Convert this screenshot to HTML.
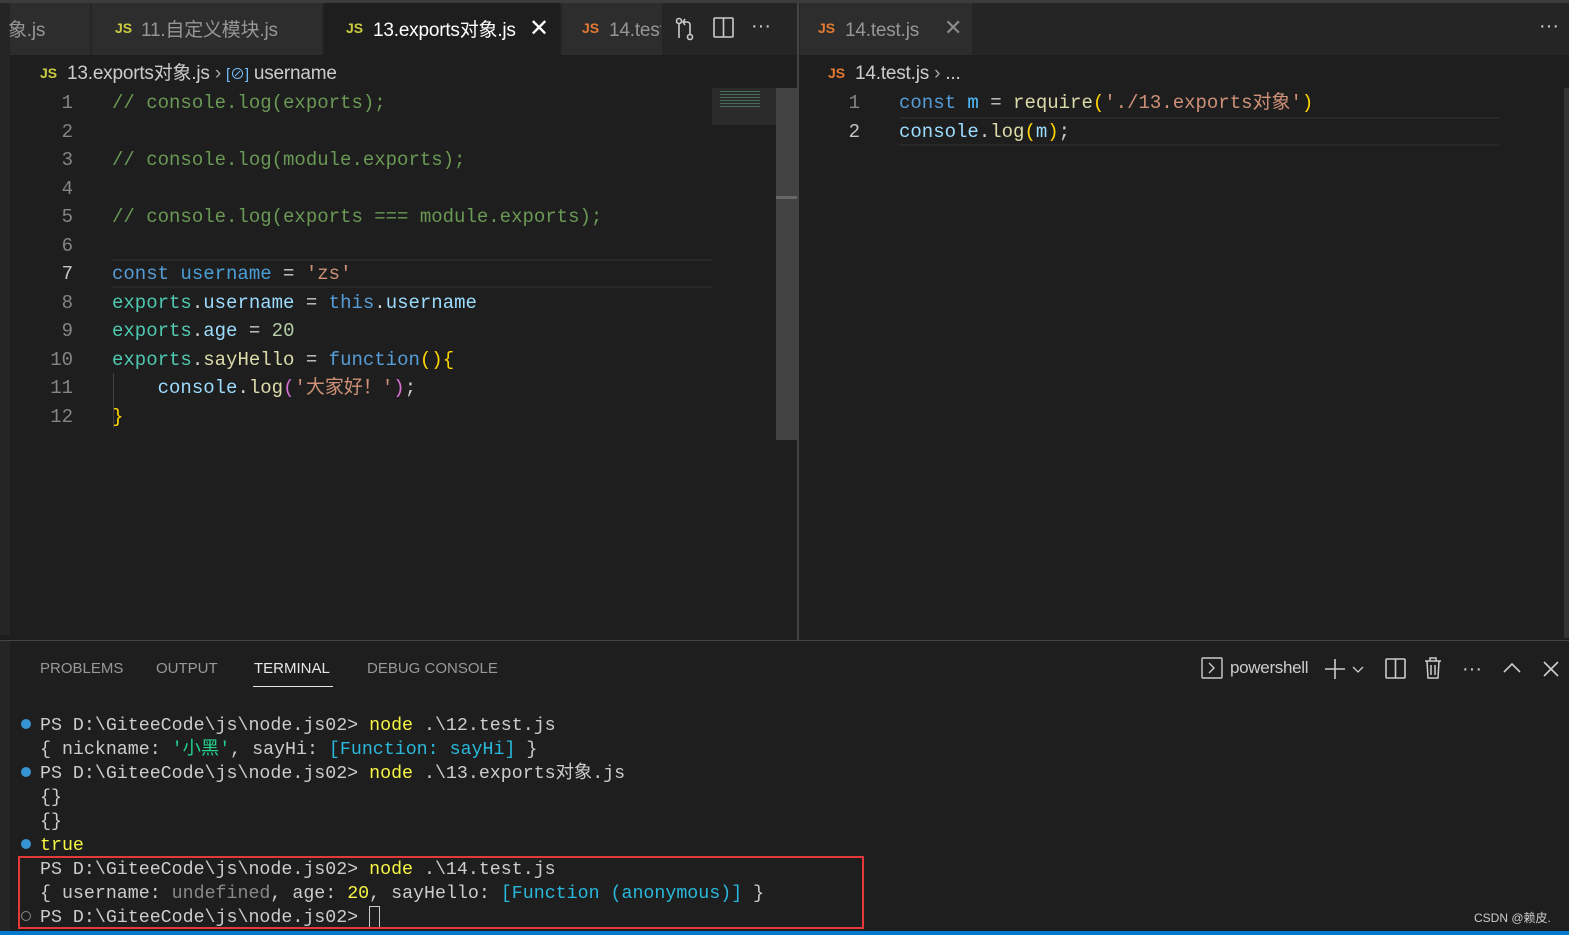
<!DOCTYPE html>
<html><head><meta charset="utf-8">
<style>
*{margin:0;padding:0;box-sizing:border-box}
body{width:1569px;height:935px;background:#1e1e1e;position:relative;overflow:hidden;font-family:"Liberation Sans","Noto Sans CJK SC",sans-serif;color:#ccc}
.a{position:absolute;white-space:pre}
.m{font-family:"Liberation Mono","Noto Sans CJK SC",monospace;font-size:19px;line-height:28.5px}
.t{font-family:"Liberation Mono","Noto Sans CJK SC",monospace;font-size:18.3px;line-height:24px;color:#ccc}
.js{font-weight:bold;font-size:14px;color:#cbcb41}
.jso{font-weight:bold;font-size:14px;color:#e37933}
.tab{font-size:19px;line-height:28px;letter-spacing:-0.2px}
.c{color:#6a9955}.k{color:#569cd6}.v{color:#4fc1ff}.s{color:#ce9178}.p{color:#4ec9b0}.f{color:#dcdcaa}.n{color:#b5cea8}.y{color:#ffd700}.pk{color:#da70d6}.pr{color:#9cdcfe}
.ln{color:#858585;text-align:right;width:40px}
.pl{font-size:15px;color:#999;line-height:20px}
</style></head><body>
<div class="a" style="left:0;top:0;width:1569px;height:55px;background:#252526"></div>
<div class="a" style="left:0;top:0;width:1569px;height:3px;background:#3c3c3c"></div>
<div class="a" style="left:10px;top:3px;width:80px;height:52px;background:#2d2d2d"></div>
<div class="a" style="left:92px;top:3px;width:230px;height:52px;background:#2d2d2d"></div>
<div class="a" style="left:324px;top:3px;width:236px;height:52px;background:#1e1e1e"></div>
<div class="a" style="left:562px;top:3px;width:100px;height:52px;background:#2d2d2d"></div>
<div class="a" style="left:800px;top:3px;width:172px;height:52px;background:#2d2d2d"></div>
<div class="a tab" style="left:8px;top:17px;color:#969696">象.js</div>
<div class="a js" style="left:115px;top:20px">JS</div><div class="a tab" style="left:141px;top:17px;color:#969696">11.自定义模块.js</div>
<div class="a js" style="left:346px;top:20px">JS</div><div class="a tab" style="left:373px;top:17px;color:#fff">13.exports对象.js</div>
<div class="a" style="left:529px;top:14px;font-size:24px;color:#fff">✕</div>
<div class="a jso" style="left:582px;top:20px">JS</div><div class="a tab" style="left:609px;top:17px;color:#969696;width:52px;overflow:hidden">14.test</div>
<svg class="a" style="left:674px;top:17px" width="22" height="24" viewBox="0 0 22 24" fill="none" stroke="#ccc" stroke-width="1.6"><circle cx="5" cy="4" r="2.5"/><circle cx="16" cy="20" r="2.5"/><path d="M5 7v14M16 17V8q0-3-3-3H9m2-3-2 3 2 3"/></svg>
<svg class="a" style="left:713px;top:17px" width="22" height="22" fill="none" stroke="#ccc" stroke-width="1.6"><rect x="1" y="1" width="19" height="19" rx="1"/><path d="M10.5 1v19"/></svg>
<div class="a" style="left:751px;top:15px;font-size:20px;color:#ccc">···</div>
<div class="a jso" style="left:818px;top:20px">JS</div><div class="a tab" style="left:845px;top:17px;color:#969696">14.test.js</div>
<div class="a" style="left:944px;top:15px;font-size:22px;color:#8b8b8b">✕</div>
<div class="a" style="left:1539px;top:15px;font-size:20px;color:#ccc">···</div>
<div class="a" style="left:0;top:55px;width:10px;height:580px;background:#252526"></div>
<div class="a js" style="left:40px;top:65px">JS</div><div class="a" style="left:67px;top:62px;font-size:19px;line-height:24px;letter-spacing:-0.2px">13.exports对象.js <span style="color:#aaa">›</span> <span style="color:#75beff;font-size:15px">[⊘]</span> username</div>
<div class="a jso" style="left:828px;top:65px">JS</div><div class="a" style="left:855px;top:62px;font-size:19px;line-height:24px;letter-spacing:-0.2px">14.test.js <span style="color:#aaa">›</span> ...</div>
<div class="a" style="left:112px;top:259px;width:600px;height:29px;border-top:2px solid #282828;border-bottom:2px solid #282828"></div>
<div class="a m ln" style="left:33px;top:89px">1
2
3
4
5
6
<span style="color:#c6c6c6">7</span>
8
9
10
11
12</div>
<div class="a m" style="left:112px;top:89px"><span class="c">// console.log(exports);</span>

<span class="c">// console.log(module.exports);</span>

<span class="c">// console.log(exports === module.exports);</span>

<span class="k">const</span> <span class="v" style="color:#4a9fd6">username</span> = <span class="s">'zs'</span>
<span class="p">exports</span>.<span class="pr">username</span> = <span class="k">this</span>.<span class="pr">username</span>
<span class="p">exports</span>.<span class="pr">age</span> = <span class="n">20</span>
<span class="p">exports</span>.<span class="f">sayHello</span> = <span class="k">function</span><span class="y">(){</span>
    <span class="pr">console</span>.<span class="f">log</span><span class="pk">(</span><span class="s">'大家好！'</span><span class="pk">)</span>;
<span class="y">}</span></div>
<div class="a" style="left:113px;top:373px;width:1px;height:55px;background:#404040"></div>
<div class="a" style="left:712px;top:88px;width:64px;height:37px;background:#2b2b2b"></div>
<div class="a" style="left:720px;top:91px;width:40px;height:18px;background:repeating-linear-gradient(#4a6a5a 0 1px,transparent 1px 3px)"></div>
<div class="a" style="left:776px;top:88px;width:21px;height:352px;background:#424242"></div>
<div class="a" style="left:776px;top:196px;width:21px;height:3px;background:#666"></div>
<div class="a" style="left:797px;top:3px;width:2px;height:637px;background:#444"></div>
<div class="a" style="left:1564px;top:88px;width:5px;height:550px;background:#333"></div>
<div class="a" style="left:899px;top:117px;width:600px;height:29px;border-top:2px solid #282828;border-bottom:2px solid #282828"></div>
<div class="a m ln" style="left:820px;top:89px">1
<span style="color:#c6c6c6">2</span></div>
<div class="a m" style="left:899px;top:89px"><span class="k">const</span> <span class="v">m</span> = <span class="f">require</span><span class="y">(</span><span class="s">'./13.exports对象'</span><span class="y">)</span>
<span class="pr">console</span>.<span class="f">log</span><span class="y">(</span><span class="pr">m</span><span class="y">)</span>;</div>
<div class="a" style="left:0;top:640px;width:1569px;height:1px;background:#444"></div>
<div class="a" style="left:0;top:641px;width:10px;height:290px;background:#252526"></div>
<div class="a pl" style="left:40px;top:659px">PROBLEMS</div>
<div class="a pl" style="left:156px;top:659px">OUTPUT</div>
<div class="a pl" style="left:254px;top:659px;color:#e7e7e7">TERMINAL</div>
<div class="a" style="left:253px;top:686px;width:80px;height:1px;background:#e7e7e7"></div>
<div class="a pl" style="left:367px;top:659px">DEBUG CONSOLE</div>
<svg class="a" style="left:1201px;top:657px" width="22" height="22" fill="none" stroke="#ccc" stroke-width="1.4"><rect x="1" y="1" width="20" height="20" rx="1"/><path d="M8 6l5 5-5 5"/></svg>
<div class="a" style="left:1230px;top:658px;font-size:17px;color:#ccc;letter-spacing:-0.3px">powershell</div>
<svg class="a" style="left:1324px;top:657px" width="44" height="24" fill="none" stroke="#ccc" stroke-width="1.6"><path d="M11 2v20M1 12h20"/><path d="M29 10l5 5 5-5" stroke-width="1.3"/></svg>
<svg class="a" style="left:1385px;top:658px" width="21" height="21" fill="none" stroke="#ccc" stroke-width="1.6"><rect x="1" y="1" width="19" height="19" rx="1"/><path d="M10.5 1v19"/></svg>
<svg class="a" style="left:1424px;top:657px" width="18" height="22" fill="none" stroke="#ccc" stroke-width="1.5"><path d="M1 4h16M6 4V1h6v3M3 4l1 17h10l1-17M7 8v10M11 8v10"/></svg>
<div class="a" style="left:1462px;top:658px;font-size:20px;color:#ccc">···</div>
<svg class="a" style="left:1503px;top:661px" width="18" height="14" fill="none" stroke="#ccc" stroke-width="1.6"><path d="M1 11l8-8 8 8"/></svg>
<svg class="a" style="left:1543px;top:661px" width="16" height="16" fill="none" stroke="#ccc" stroke-width="1.6"><path d="M1 1l14 14M15 1L1 15"/></svg>
<div class="a t" style="left:40px;top:714px">PS D:\GiteeCode\js\node.js02&gt; <span style="color:#f5f543">node</span> .\12.test.js
{ nickname: <span style="color:#23d18b">'小黑'</span>, sayHi: <span style="color:#29b8db">[Function: sayHi]</span> }
PS D:\GiteeCode\js\node.js02&gt; <span style="color:#f5f543">node</span> .\13.exports对象.js
{}
{}
<span style="color:#f5f543">true</span>
PS D:\GiteeCode\js\node.js02&gt; <span style="color:#f5f543">node</span> .\14.test.js
{ username: <span style="color:#888">undefined</span>, age: <span style="color:#f5f543">20</span>, sayHello: <span style="color:#29b8db">[Function (anonymous)]</span> }
PS D:\GiteeCode\js\node.js02&gt; </div>
<div class="a" style="left:369px;top:906px;width:11px;height:22px;border:1px solid #ccc"></div>
<div class="a" style="left:21px;top:719px;width:10px;height:10px;border-radius:50%;background:#3794d4"></div>
<div class="a" style="left:21px;top:767px;width:10px;height:10px;border-radius:50%;background:#3794d4"></div>
<div class="a" style="left:21px;top:839px;width:10px;height:10px;border-radius:50%;background:#3794d4"></div>
<div class="a" style="left:21px;top:911px;width:10px;height:10px;border-radius:50%;border:1.5px solid #888"></div>
<div class="a" style="left:18px;top:856px;width:846px;height:73px;border:2px solid #e5383b"></div>
<div class="a" style="left:1474px;top:909px;font-size:12px;color:#ccc">CSDN @赖皮.</div>
<div class="a" style="left:0;top:931px;width:1569px;height:4px;background:#007acc"></div>
</body></html>
